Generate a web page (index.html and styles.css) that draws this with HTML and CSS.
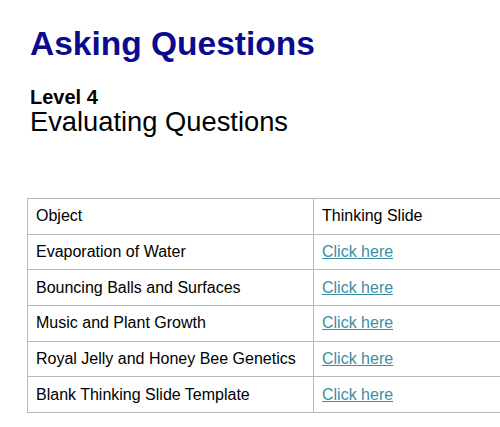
FILE: index.html
```html
<!DOCTYPE html>
<html>
<head>
<meta charset="utf-8">
<link rel="stylesheet" href="styles.css">
</head>
<body>
<div class="page">
  <h1 class="title">Asking Questions</h1>
  <div class="level">Level 4</div>
  <div class="subtitle">Evaluating Questions</div>
  <table class="grid">
    <tr><td class="c1">Object</td><td class="c2">Thinking Slide</td></tr>
    <tr><td class="c1">Evaporation of Water</td><td class="c2"><a href="#">Click here</a></td></tr>
    <tr><td class="c1">Bouncing Balls and Surfaces</td><td class="c2"><a href="#">Click here</a></td></tr>
    <tr><td class="c1">Music and Plant Growth</td><td class="c2"><a href="#">Click here</a></td></tr>
    <tr><td class="c1">Royal Jelly and Honey Bee Genetics</td><td class="c2"><a href="#">Click here</a></td></tr>
    <tr><td class="c1">Blank Thinking Slide Template</td><td class="c2"><a href="#">Click here</a></td></tr>
  </table>
</div>
</body>
</html>
```
FILE: styles.css
```css
html, body {
  margin: 0;
  padding: 0;
  background: #fff;
  overflow: hidden;
}
.page {
  font-family: "Liberation Sans", Arial, sans-serif;
  color: #000;
  padding: 24px 0 0 30px;
}
.title {
  margin: 0;
  font-size: 33.5px;
  font-weight: bold;
  color: #0b0b8e;
  line-height: 40px;
}
.level {
  margin-top: 22px;
  font-size: 20px;
  font-weight: bold;
  line-height: 22px;
}
.subtitle {
  font-size: 27.3px;
  line-height: 28px;
}
.grid {
  margin-top: 62px;
  margin-left: -3px;
  border-collapse: collapse;
  width: 500px;
  font-size: 16px;
}
.grid td {
  border: 1px solid #b9b9b9;
  height: 35.67px;
  padding: 0 8px;
  vertical-align: middle;
  box-sizing: border-box;
}
.c1 { width: 286px; }
.grid a {
  color: #3b8ea5;
  text-decoration: underline;
}
```
